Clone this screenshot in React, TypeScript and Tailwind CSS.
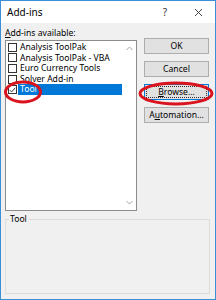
import React from "react";

const items = [
  { label: "Analysis ToolPak", checked: false },
  { label: "Analysis ToolPak - VBA", checked: false },
  { label: "Euro Currency Tools", checked: false },
  { label: "Solver Add-in", checked: false },
  { label: "Tool", checked: true, selected: true },
];

function Check({ checked }: { checked: boolean }) {
  return (
    <div className="w-[9px] h-[9px] border border-[#333333] bg-white shrink-0 flex items-center justify-center">
      {checked && (
        <svg width="8" height="8" viewBox="0 0 8 8">
          <path d="M1 4.2 L3 6.2 L7 1.5" fill="none" stroke="#222" strokeWidth="1" />
        </svg>
      )}
    </div>
  );
}

function Btn({ children, focused }: { children: React.ReactNode; focused?: boolean }) {
  return (
    <div
      className={
        "h-[16px] w-[65px] flex items-center justify-center bg-[#e1e1e1] border " +
        (focused ? "border-[#0078d7]" : "border-[#adadad]")
      }
    >
      <div
        className={
          "h-[12px] w-[61px] flex items-center justify-center " +
          (focused ? "border border-dotted border-[#333]" : "")
        }
      >
        {children}
      </div>
    </div>
  );
}

export default function App() {
  return (
    <div
      className="relative w-[216px] h-[300px] border border-[#3c8fd6] flex flex-col text-[8.6px] text-black"
      style={{ fontFamily: '"Noto Sans", "Open Sans", sans-serif' }}
    >
      <div className="h-[22px] bg-white flex items-center pl-[6px] shrink-0">
        <span className="text-[10px]">Add-ins</span>
        <span className="ml-auto text-[10px] mr-[27px] text-[#333]">?</span>
        <svg width="9" height="9" viewBox="0 0 9 9" className="mr-[12px]">
          <path d="M1 1 L8 8 M8 1 L1 8" stroke="#333" strokeWidth="0.9" />
        </svg>
      </div>
      <div className="flex-1 bg-[#f0f0f0] flex flex-col px-[4px] pb-[5px]">
        <div className="flex">
          <div className="flex flex-col">
            <div className="h-[17px] pt-[5px] leading-[10px]">
              <span className="underline">A</span>dd-ins available:
            </div>
            <div className="w-[132px] h-[171px] bg-white border border-[#8c8c8c] flex">
              <div className="flex-1 flex flex-col pt-[1px] pl-[2px]">
                {items.map((it) => (
                  <div key={it.label} className="h-[10.6px] flex items-center">
                    <Check checked={it.checked} />
                    <div
                      className={
                        "h-full flex items-center pl-[2px] ml-[1px] flex-1 leading-none whitespace-nowrap " +
                        (it.selected ? "bg-[#0078d7] text-white" : "")
                      }
                    >
                      {it.label}
                    </div>
                  </div>
                ))}
              </div>
              <div className="w-[14px] flex flex-col items-center justify-between py-[5px]">
                <svg width="7" height="5" viewBox="0 0 7 5">
                  <path d="M0.5 4 L3.5 1 L6.5 4" fill="none" stroke="#a6a6a6" strokeWidth="1" />
                </svg>
                <svg width="7" height="5" viewBox="0 0 7 5">
                  <path d="M0.5 1 L3.5 4 L6.5 1" fill="none" stroke="#a6a6a6" strokeWidth="1" />
                </svg>
              </div>
            </div>
          </div>
          <div className="ml-[7px] pt-[15px] flex flex-col gap-[7px]">
            <Btn>OK</Btn>
            <Btn>Cancel</Btn>
            <Btn focused>
              <span>
                <span className="underline">B</span>rowse...
              </span>
            </Btn>
            <Btn>
              <span>
                A<span className="underline">u</span>tomation...
              </span>
            </Btn>
          </div>
        </div>
        <fieldset className="mt-[3px] flex-1 border border-[#dcdcdc] mr-[1px] pl-[3px]">
          <legend className="px-[1px] leading-[10px]">Tool</legend>
        </fieldset>
      </div>
      <svg className="absolute left-0 top-0 pointer-events-none" width="216" height="300">
        <ellipse cx="22" cy="91" rx="17.5" ry="10" fill="none" stroke="#d9141e" strokeWidth="3" />
        <ellipse cx="175" cy="92.5" rx="36" ry="10.5" fill="none" stroke="#d9141e" strokeWidth="3" />
      </svg>
    </div>
  );
}
